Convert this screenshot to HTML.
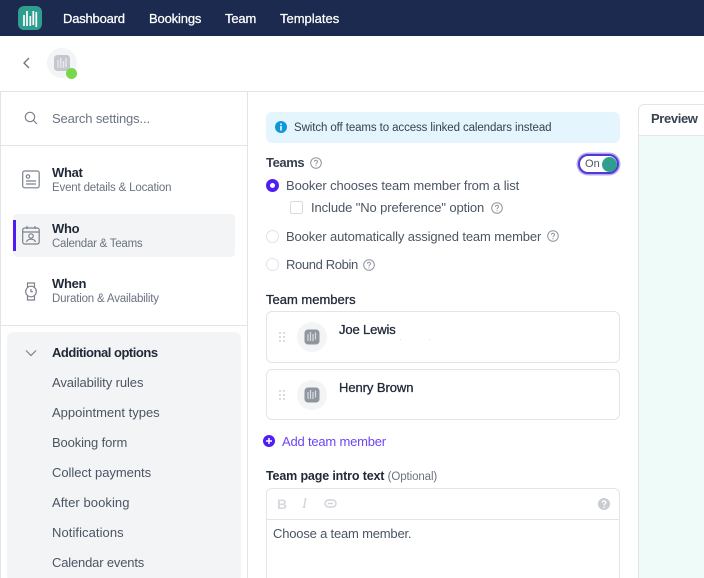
<!DOCTYPE html>
<html><head><meta charset="utf-8">
<style>
html,body{margin:0;padding:0;background:#fff}
#p{position:relative;width:704px;height:578px;overflow:hidden;background:#fff;font-family:"Liberation Sans",sans-serif;color:#374151}
#p div,#p span.t,#p svg{position:absolute}
.t{position:absolute;white-space:nowrap;font-size:13px;line-height:16px}
.b{font-weight:700;color:#1f2937}
.s{font-size:11.5px;color:#6b7280}
.o{color:#4b5563}
.n{color:#fff;font-size:13px;font-weight:400;-webkit-text-stroke:.25px #fff}
</style></head><body><div id="p">
<div style="left:0;top:0;width:704px;height:36px;background:#1b2a4e"></div>
<svg style="left:18px;top:6px" width="24" height="24" viewBox="0 0 24 24"><rect width="24" height="24" rx="6" fill="#2f9e8f"/><g stroke="#fff" stroke-width="1.700"><path d="M6 9v11M9 5v15M12.300 10v10M15.300 5v14M18.300 6v15"/></g></svg>
<span class="t n" style="left:63px;top:11px;letter-spacing:-.2px">Dashboard</span>
<span class="t n" style="left:149px;top:11px;letter-spacing:-.15px">Bookings</span>
<span class="t n" style="left:225px;top:11px;letter-spacing:-.15px">Team</span>
<span class="t n" style="left:280px;top:11px;letter-spacing:0">Templates</span>

<svg style="left:21px;top:56px" width="12" height="14" viewBox="0 0 12 14"><path d="M8 2 3 7l5 5" fill="none" stroke="#6b7280" stroke-width="1.300"/></svg>
<div style="left:47px;top:48px;width:30px;height:30px;border-radius:50%;background:#f3f4f6"></div>
<svg style="left:54px;top:55px" width="16" height="16" viewBox="0 0 16 16"><rect width="16" height="16" rx="3.500" fill="#c4c8ce"/><path d="M4 5v8M6.800 3v10M9.500 6v7M12 3v9" stroke="#e9eaec" stroke-width="1.300"/></svg>
<div style="left:66px;top:68px;width:11px;height:11px;border-radius:50%;background:#76d84a"></div>
<div style="left:0;top:91px;width:704px;height:1px;background:#e1e5ea"></div>

<div style="left:0;top:92px;width:1px;height:486px;background:#e1e5ea"></div>
<div style="left:247px;top:92px;width:1px;height:486px;background:#e1e5ea"></div>
<svg style="left:24px;top:111px" width="14" height="14" viewBox="0 0 14 14"><circle cx="6" cy="6" r="4.700" fill="none" stroke="#7b828c" stroke-width="1.200"/><path d="m9.500 9.500 3.500 3.500" stroke="#7b828c" stroke-width="1.200"/></svg>
<span class="t" style="left:52px;top:111px;color:#6b7280;letter-spacing:-.14px">Search settings...</span>
<div style="left:1px;top:145px;width:246px;height:1px;background:#e1e5ea"></div>

<svg style="left:22px;top:170px" width="18" height="19" viewBox="0 0 18 19" fill="none" stroke="#7b828c" stroke-width="1.200"><rect x=".7" y="1" width="16.500" height="16.800" rx="2"/><circle cx="6" cy="6.500" r="1.700"/><path d="M4 11h10M4 14h10"/></svg>
<span class="t b" style="left:52px;top:165px;letter-spacing:-.3px">What</span>
<span class="t s" style="left:52px;top:180px;letter-spacing:-.17px">Event details &amp; Location</span>

<div style="left:13px;top:214px;width:222px;height:43px;background:#f3f4f6;border-radius:4px"></div>
<div style="left:13px;top:220px;width:3px;height:31px;background:#4f1ef5"></div>
<svg style="left:22px;top:226px" width="18" height="19" viewBox="0 0 18 19" fill="none" stroke="#7b828c" stroke-width="1.200"><rect x=".7" y="2" width="16.500" height="16" rx="2"/><path d="M.7 6h16.500M5 0v3M13 0v3"/><circle cx="9" cy="10" r="2.200"/><path d="M4.500 16c.5-2 2-2.800 4.500-2.800s4 .8 4.500 2.800"/></svg>
<span class="t b" style="left:52px;top:221px;letter-spacing:-.3px">Who</span>
<span class="t s" style="left:52px;top:236px;letter-spacing:-.25px">Calendar &amp; Teams</span>

<svg style="left:24px;top:282px" width="14" height="19" viewBox="0 0 14 19" fill="none" stroke="#7b828c" stroke-width="1.200"><circle cx="7" cy="9.500" r="5.300"/><path d="M3.500 5V1h7v4M3.500 14v4h7v-4M7 7v2.700h2"/></svg>
<span class="t b" style="left:52px;top:276px;letter-spacing:-.3px">When</span>
<span class="t s" style="left:52px;top:291px;letter-spacing:-.18px">Duration &amp; Availability</span>

<div style="left:1px;top:325px;width:246px;height:1px;background:#e1e5ea"></div>
<div style="left:7px;top:332px;width:234px;height:250px;background:#f3f4f6;border-radius:6px"></div>
<svg style="left:25px;top:349px" width="12" height="8" viewBox="0 0 12 8"><path d="m1 1.500 5 5 5-5" fill="none" stroke="#7b828c" stroke-width="1.200"/></svg>
<span class="t b" style="left:52px;top:345px;letter-spacing:-.47px">Additional options</span>
<span class="t o" style="left:52px;top:375px;letter-spacing:-.09px">Availability rules</span>
<span class="t o" style="left:52px;top:405px;letter-spacing:0">Appointment types</span>
<span class="t o" style="left:52px;top:435px;letter-spacing:-.12px">Booking form</span>
<span class="t o" style="left:52px;top:465px;letter-spacing:-.04px">Collect payments</span>
<span class="t o" style="left:52px;top:495px;letter-spacing:.07px">After booking</span>
<span class="t o" style="left:52px;top:525px;letter-spacing:.07px">Notifications</span>
<span class="t o" style="left:52px;top:555px;letter-spacing:-.17px">Calendar events</span>

<div style="left:266px;top:112px;width:354px;height:31px;background:#e4f5fd;border-radius:6px"></div>
<svg style="left:275px;top:121px" width="12" height="12" viewBox="0 0 12 12"><circle cx="6" cy="6" r="6" fill="#0f97d8"/><rect x="5.200" y="5" width="1.600" height="4.500" fill="#fff"/><rect x="5.200" y="2.500" width="1.600" height="1.600" fill="#fff"/></svg>
<span class="t" style="left:294px;top:120px;font-size:11.5px;letter-spacing:-.1px;color:#374151">Switch off teams to access linked calendars instead</span>

<span class="t b" style="left:266px;top:155px;color:#374151;letter-spacing:-.4px">Teams</span>
<svg style="left:310px;top:157px" width="12" height="12" viewBox="0 0 12 12"><use href="#q"/></svg>
<div style="left:578px;top:154px;width:37px;height:16px;border:2px solid #4f3bd0;border-radius:11px;background:#fff;box-shadow:0 0 0 1.500px #b9a9f7"></div>
<span class="t" style="left:585px;top:156px;font-size:11px;color:#4b5563;letter-spacing:.1px">On</span>
<div style="left:601.500px;top:156.500px;width:15px;height:15px;border-radius:50%;background:#2f9e8f"></div>

<div style="left:266px;top:179px;width:5px;height:5px;border:4px solid #4f1ef5;border-radius:50%"></div>
<span class="t o" style="left:286px;top:178px;letter-spacing:-.1px">Booker chooses team member from a list</span>
<div style="left:290px;top:201px;width:11px;height:11px;border:1px solid #d8dce2;border-radius:2px"></div>
<span class="t o" style="left:311px;top:200px;letter-spacing:-.1px">Include "No preference" option</span>
<svg style="left:491px;top:202px" width="12" height="12" viewBox="0 0 12 12"><use href="#q"/></svg>
<div style="left:266px;top:230px;width:11px;height:11px;border:1px solid #dfe3e8;border-radius:50%"></div>
<span class="t o" style="left:286px;top:229px;letter-spacing:-.12px">Booker automatically assigned team member</span>
<svg style="left:547px;top:230px" width="12" height="12" viewBox="0 0 12 12"><use href="#q"/></svg>
<div style="left:266px;top:258px;width:11px;height:11px;border:1px solid #dfe3e8;border-radius:50%"></div>
<span class="t o" style="left:286px;top:257px;letter-spacing:-.37px">Round Robin</span>
<svg style="left:363px;top:259px" width="12" height="12" viewBox="0 0 12 12"><use href="#q"/></svg>

<svg width="0" height="0" style="left:0;top:0"><defs><g id="q"><circle cx="6" cy="6" r="5.300" fill="none" stroke="#8f959d" stroke-width="1"/><path d="M4.500 4.800c0-2 3-2 3-.1 0 1.200-1.500 1.200-1.500 2.500" fill="none" stroke="#8f959d" stroke-width="1"/><circle cx="6" cy="8.800" r=".6" fill="#8f959d"/></g>
<g id="av"><circle cx="15" cy="15" r="15" fill="#f3f4f6"/><rect x="7.500" y="7.500" width="15" height="15" rx="3.500" fill="#8f969d"/><path d="M11 12v7M13.500 10v9M16 12v7M18.500 10.500v7" stroke="#d9dcdf" stroke-width="1.200"/></g>
<g id="d" fill="#a0a5ab"><circle cx="1" cy="1" r=".7"/><circle cx="5" cy="1" r=".7"/><circle cx="1" cy="5" r=".7"/><circle cx="5" cy="5" r=".7"/><circle cx="1" cy="9" r=".7"/><circle cx="5" cy="9" r=".7"/></g></defs></svg>

<div style="left:638px;top:104px;width:80px;height:500px;border:1px solid #e1e5ea;border-radius:6px 0 0 0;background:#fff"></div>
<div style="left:639px;top:135px;width:65px;height:443px;background:#effbf8;border-top:1px solid #e5e7eb"></div>
<span class="t b" style="left:651px;top:111px;color:#374151;letter-spacing:-.37px">Preview</span>

<span class="t b" style="left:266px;top:292px;font-weight:400;color:#1f2937;-webkit-text-stroke:.3px #1f2937;letter-spacing:0">Team members</span>
<div style="left:266px;top:311px;width:352px;height:50px;border:1px solid #e1e5ea;border-radius:6px"></div>
<svg style="left:279px;top:332px" width="6" height="10"><use href="#d"/></svg>
<svg style="left:297px;top:322px" width="30" height="30"><use href="#av"/></svg>
<span class="t b" style="left:339px;top:322px;font-weight:400;-webkit-text-stroke:.3px #1f2937;letter-spacing:-.13px">Joe Lewis</span>
<div style="left:400px;top:339px;width:1px;height:1px;background:#ddd"></div>
<div style="left:429px;top:339px;width:1px;height:1px;background:#ddd"></div>
<div style="left:266px;top:369px;width:352px;height:49px;border:1px solid #e1e5ea;border-radius:6px"></div>
<svg style="left:279px;top:390px" width="6" height="10"><use href="#d"/></svg>
<svg style="left:297px;top:380px" width="30" height="30"><use href="#av"/></svg>
<span class="t b" style="left:339px;top:380px;font-weight:400;-webkit-text-stroke:.3px #1f2937;letter-spacing:-.07px">Henry Brown</span>
<svg style="left:263px;top:435px" width="12" height="12" viewBox="0 0 12 12"><circle cx="6" cy="6" r="6" fill="#4f1ef5"/><path d="M6 3v6M3 6h6" stroke="#fff" stroke-width="1.500"/></svg>
<span class="t" style="left:282px;top:434px;color:#6d45f5;letter-spacing:-.2px">Add team member</span>

<span class="t b" style="left:266px;top:468px;font-size:12.500px;font-weight:700;letter-spacing:-.15px">Team page intro text <span style="font-weight:400;color:#6b7280;font-size:11.500px;letter-spacing:-.1px">(Optional)</span></span>
<div style="left:266px;top:488px;width:352px;height:100px;border:1px solid #e1e5ea;border-radius:6px"></div>
<div style="left:267px;top:519px;width:352px;height:1px;background:#e1e5ea"></div>
<span class="t" style="left:277px;top:496px;font-weight:700;color:#d6d9dd;font-size:14px;letter-spacing:0">B</span>
<span class="t" style="left:302px;top:496px;font-style:italic;color:#d0d3d8;font-size:15px;font-family:'Liberation Serif',serif;letter-spacing:0">I</span>
<svg style="left:324px;top:499px" width="13" height="9" viewBox="0 0 13 9" fill="none" stroke="#cfd2d7" stroke-width="1.400"><rect x="1" y="1" width="11" height="7" rx="3.500"/><path d="M4 4.500h5"/></svg>
<svg style="left:598px;top:498px" width="12" height="12" viewBox="0 0 12 12"><circle cx="6" cy="6" r="6" fill="#c9ccd1"/><path d="M4.300 4.700c0-2.300 3.500-2.300 3.500-.1 0 1.300-1.800 1.300-1.800 2.800" fill="none" stroke="#fff" stroke-width="1.300"/><circle cx="6" cy="9.300" r=".8" fill="#fff"/></svg>
<span class="t" style="left:273px;top:526px;color:#4b5563;letter-spacing:-.19px">Choose a team member.</span>
</div></body></html>
